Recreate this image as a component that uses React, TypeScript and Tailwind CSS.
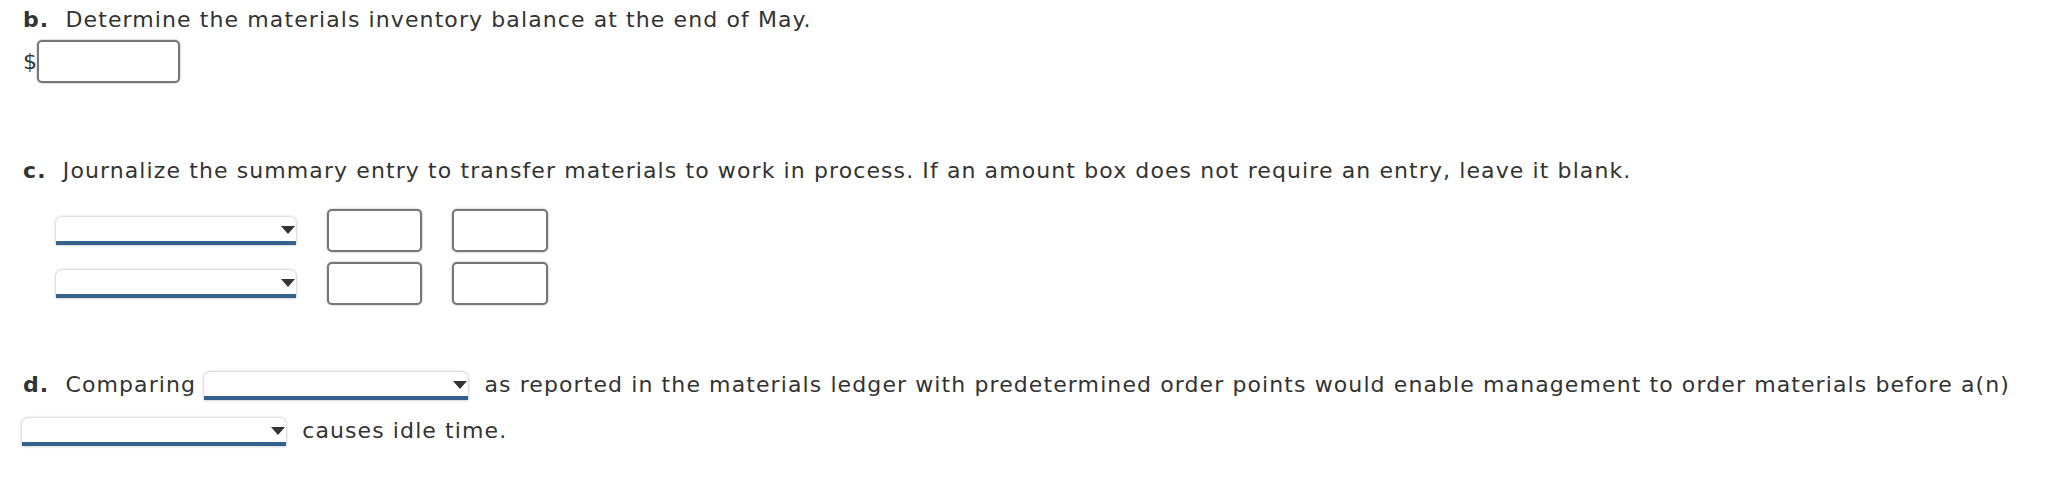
import React from 'react'

const font = { fontFamily: '"DejaVu Sans", Verdana, sans-serif' }

function Select({ w }: { w: string }) {
  return (
    <span className={`relative inline-flex h-[28px] ${w} items-center justify-end rounded-t-[6px] border-b-4 border-[#36618d] bg-white pr-[1px] shadow-[0_0_3px_rgba(0,0,0,0.35)] align-middle`}>
      <svg width="14" height="8" viewBox="0 0 14 8" className="mt-[2px]">
        <path d="M0 0h14L7 8z" fill="#333" />
      </svg>
    </span>
  )
}

function Box({ w }: { w: string }) {
  return <span className={`block h-[43px] ${w} shrink-0 rounded-[5px] border-2 border-[#777] bg-white shadow-[0_0_2px_rgba(0,0,0,0.4)]`} />
}

export default function App() {
  return (
    <div className="min-h-[502px] w-[2054px] bg-white text-[22px] tracking-[1.1px] text-[#333]" style={font}>
      <div className="pl-[23px] pt-[4px]">
        <p className="leading-[32px]">
          <b>b.</b>&nbsp; Determine the materials inventory balance at the end of May.
        </p>
        <div className="mt-[4px] flex items-center">
          <span className="w-[14px] tracking-normal">$</span>
          <Box w="w-[143px]" />
        </div>

        <p className="mt-[72px] leading-[32px]">
          <b>c.</b>&nbsp; Journalize the summary entry to transfer materials to work in process. If an amount box does not require an entry, leave it blank.
        </p>
        <div className="mt-[22px] flex flex-col gap-[10px] pl-[33px]">
          {[0, 1].map(i => (
            <div key={i} className="flex items-center">
              <Select w="w-[240px]" />
              <div className="ml-[31px]"><Box w="w-[95px]" /></div>
              <div className="ml-[30px]"><Box w="w-[96px]" /></div>
            </div>
          ))}
        </div>

        <div className="mt-[57px] leading-[46px]">
          <b>d.</b>&nbsp; Comparing <Select w="w-[264px]" /> &nbsp;as reported in the materials ledger with predetermined order points would enable management to order materials before a(n)
          <br />
          <span className="-ml-[1px]"><Select w="w-[264px]" /></span> &nbsp;causes idle time.
        </div>
      </div>
    </div>
  )
}
